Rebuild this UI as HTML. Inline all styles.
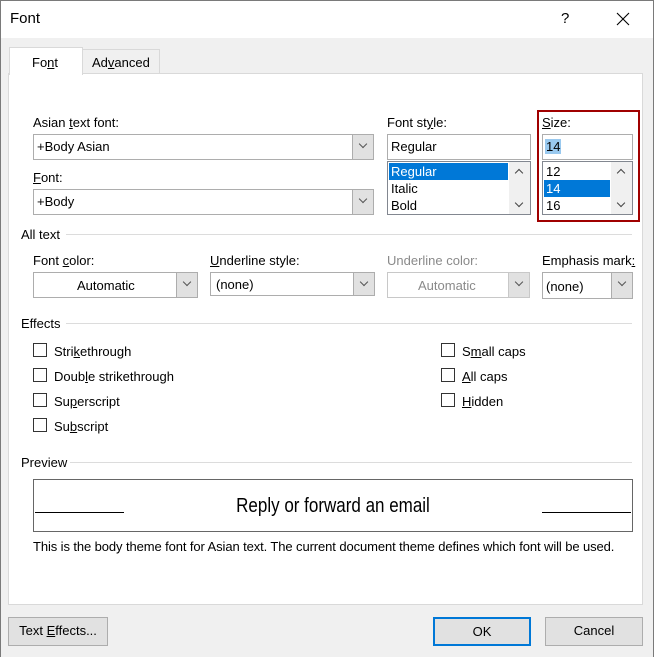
<!DOCTYPE html>
<html><head><meta charset="utf-8"><style>
*{margin:0;padding:0;box-sizing:border-box}
body{width:654px;height:657px;overflow:hidden;background:#f0f0f0;font-family:"Liberation Sans","DejaVu Sans",sans-serif;font-size:13px;color:#000;position:relative}
.a{position:absolute;white-space:nowrap}
.win{position:absolute;left:0;top:0;width:654px;height:657px;border:1px solid #7a7a7a;border-bottom:none}
.title{position:absolute;left:1px;top:1px;width:652px;height:37px;background:#fff}
.panel{position:absolute;left:8px;top:73px;width:635px;height:532px;background:#fff;border:1px solid #d9d9d9}
.box{position:absolute;background:#fff;border:1px solid #adadad}
.btn{position:absolute;top:0;right:0;width:21px;height:100%;background:#e1e1e1;border-left:1px solid #adadad}
.btn:after{content:"";position:absolute;left:7px;top:6px;width:5px;height:5px;border-right:1px solid #555;border-bottom:1px solid #555;transform:rotate(45deg)}
.cb{position:absolute;width:14px;height:14px;border:1px solid #333;background:#fff}
.line{position:absolute;height:1px;background:#dcdcdc}
u{text-decoration:underline}
.pb{position:absolute;background:#e1e1e1;border:1px solid #adadad;text-align:center;line-height:26px}
.sel{background:#0078d7;color:#fff}
.sb{position:absolute;right:0;top:0;width:21px;height:100%;background:#f0f0f0}
.up,.dn{position:absolute;left:7px;width:6px;height:6px;border-left:1.5px solid #444;border-top:1.5px solid #444}
.up{top:8px;transform:rotate(45deg)}
.dn{bottom:8px;transform:rotate(225deg)}
</style></head><body>
<div class="win"></div>
<div class="title"></div>
<div class="a" style="left:10px;top:10px;font-size:15px">Font</div>
<div class="a" style="left:561px;top:10px;font-size:15px">?</div>
<svg class="a" style="left:616px;top:12px" width="14" height="14"><path d="M1 1L13 13M13 1L1 13" stroke="#000" stroke-width="1.1"/></svg>

<div class="panel"></div>
<div class="a" style="left:9px;top:47px;width:74px;height:28px;background:#fff;border:1px solid #d9d9d9;border-bottom:none"></div>
<div class="a" style="left:32px;top:55px">Fo<u>n</u>t</div>
<div class="a" style="left:82px;top:49px;width:78px;height:24px;background:#f0f0f0;border:1px solid #d9d9d9;border-bottom:none"></div>
<div class="a" style="left:92px;top:55px">Ad<u>v</u>anced</div>

<div class="a" style="left:33px;top:115px">Asian <u>t</u>ext font:</div>
<div class="box" style="left:33px;top:134px;width:341px;height:26px"><span class="a" style="left:3px;top:4px">+Body Asian</span><div class="btn"></div></div>
<div class="a" style="left:33px;top:170px"><u>F</u>ont:</div>
<div class="box" style="left:33px;top:189px;width:341px;height:26px"><span class="a" style="left:3px;top:4px">+Body</span><div class="btn"></div></div>

<div class="a" style="left:387px;top:115px">Font st<u>y</u>le:</div>
<div class="box" style="left:387px;top:134px;width:144px;height:26px"><span class="a" style="left:3px;top:4px">Regular</span></div>
<div class="box" style="left:387px;top:161px;width:144px;height:54px;border-color:#828790">
<div class="a sel" style="left:1px;top:1px;width:119px;height:17px;padding:1px 2px">Regular</div>
<div class="a" style="left:3px;top:19px">Italic</div>
<div class="a" style="left:3px;top:36px">Bold</div>
<div class="sb"><div class="up"></div><div class="dn"></div></div></div>

<div class="a" style="left:537px;top:110px;width:103px;height:112px;border:2px solid #a00000"></div>
<div class="a" style="left:542px;top:115px"><u>S</u>ize:</div>
<div class="box" style="left:542px;top:134px;width:91px;height:26px"><span class="a" style="left:2px;top:4px;background:#99c9ef;padding:0 1px">14</span></div>
<div class="box" style="left:542px;top:161px;width:91px;height:54px;border-color:#828790">
<div class="a" style="left:3px;top:2px">12</div>
<div class="a sel" style="left:1px;top:18px;width:66px;height:17px;padding:1px 2px">14</div>
<div class="a" style="left:3px;top:36px">16</div>
<div class="sb"><div class="up"></div><div class="dn"></div></div></div>

<div class="a" style="left:21px;top:227px">All text</div>
<div class="line" style="left:66px;top:234px;width:566px"></div>
<div class="a" style="left:33px;top:253px">Font <u>c</u>olor:</div>
<div class="box" style="left:33px;top:272px;width:165px;height:26px"><span class="a" style="left:43px;top:5px">Automatic</span><div class="btn"></div></div>
<div class="a" style="left:210px;top:253px"><u>U</u>nderline style:</div>
<div class="box" style="left:210px;top:272px;width:165px;height:24px"><span class="a" style="left:5px;top:4px">(none)</span><div class="btn"></div></div>
<div class="a" style="left:387px;top:253px;color:#8a8a8a">Underline color:</div>
<div class="box" style="left:387px;top:272px;width:143px;height:26px;border-color:#c8c8c8"><span class="a" style="left:30px;top:5px;color:#8a8a8a">Automatic</span><div class="btn" style="border-color:#c8c8c8"></div></div>
<div class="a" style="left:542px;top:253px">Emphasis mark<u>:</u></div>
<div class="box" style="left:542px;top:272px;width:91px;height:27px"><span class="a" style="left:3px;top:6px">(none)</span><div class="btn"></div></div>

<div class="a" style="left:21px;top:316px">Effects</div>
<div class="line" style="left:66px;top:323px;width:566px"></div>
<div class="cb" style="left:33px;top:343px"></div><div class="a" style="left:54px;top:344px">Stri<u>k</u>ethrough</div>
<div class="cb" style="left:33px;top:368px"></div><div class="a" style="left:54px;top:369px">Doub<u>l</u>e strikethrough</div>
<div class="cb" style="left:33px;top:393px"></div><div class="a" style="left:54px;top:394px">Su<u>p</u>erscript</div>
<div class="cb" style="left:33px;top:418px"></div><div class="a" style="left:54px;top:419px">Su<u>b</u>script</div>
<div class="cb" style="left:441px;top:343px"></div><div class="a" style="left:462px;top:344px">S<u>m</u>all caps</div>
<div class="cb" style="left:441px;top:368px"></div><div class="a" style="left:462px;top:369px"><u>A</u>ll caps</div>
<div class="cb" style="left:441px;top:393px"></div><div class="a" style="left:462px;top:394px"><u>H</u>idden</div>

<div class="a" style="left:21px;top:455px">Preview</div>
<div class="line" style="left:70px;top:462px;width:562px"></div>
<div class="a" style="left:33px;top:479px;width:600px;height:53px;border:1px solid #666;background:#fff"></div>
<div class="a" style="left:35px;top:512px;width:89px;height:1px;background:#000"></div>
<div class="a" style="left:542px;top:512px;width:89px;height:1px;background:#000"></div>
<div class="a" style="left:33px;top:496px;width:600px;text-align:center;font-size:17px;transform:scaleY(1.2)">Reply or forward an email</div>
<div class="a" style="left:33px;top:539px;font-size:13px;letter-spacing:-0.1px">This is the body theme font for Asian text. The current document theme defines which font will be used.</div>

<div class="pb" style="left:8px;top:617px;width:100px;height:29px">Text <u>E</u>ffects...</div>
<div class="pb" style="left:433px;top:617px;width:98px;height:29px;border:2px solid #0078d7;line-height:25px">OK</div>
<div class="pb" style="left:545px;top:617px;width:98px;height:29px">Cancel</div>
</body></html>
